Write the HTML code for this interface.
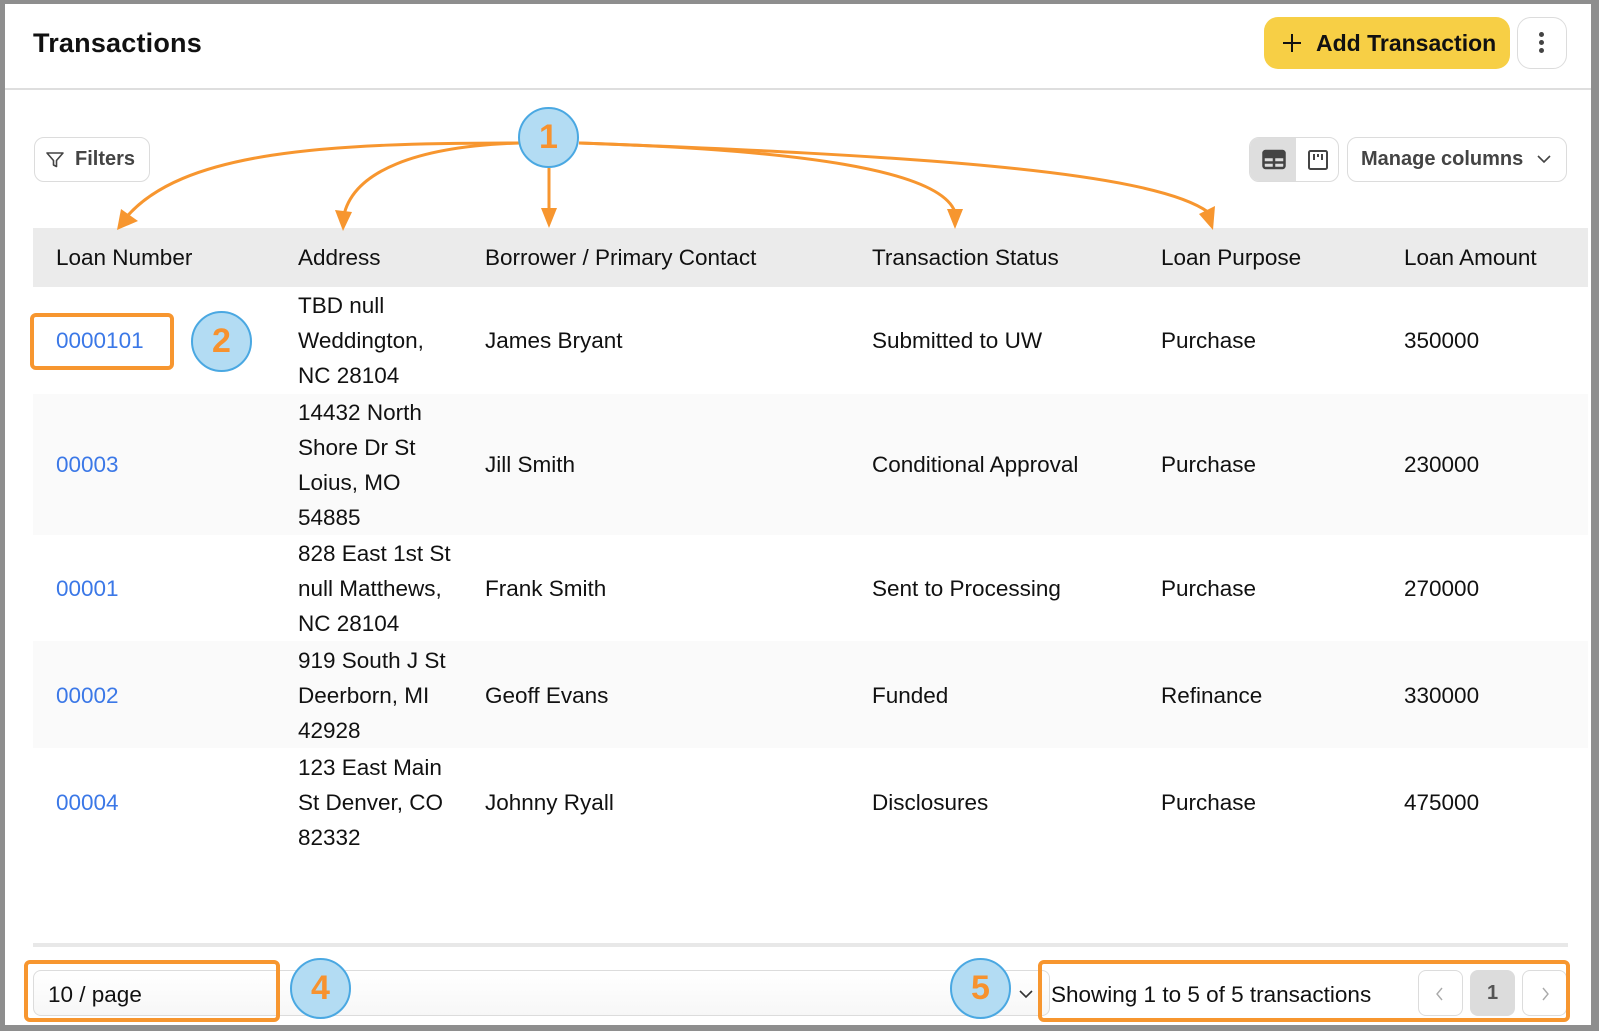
<!DOCTYPE html>
<html><head><meta charset="utf-8"><style>
*{box-sizing:border-box;margin:0;padding:0}
body{width:1599px;height:1031px;background:#8e8e8e;font-family:"Liberation Sans",sans-serif;color:#1a1a1a;position:relative;overflow:hidden}
.panel{position:absolute;left:5px;top:4px;width:1586px;height:1021px;background:#fff}
.abs{position:absolute}
.title{left:33px;top:28px;font-size:27px;font-weight:bold;color:#111;letter-spacing:0.2px}
.hline{left:5px;top:88px;width:1586px;height:2px;background:#dedede}
.btn{border:1.5px solid #dcdcdc;border-radius:10px;background:#fff}
.add{left:1264px;top:17px;width:246px;height:52px;background:#f7cf45;border-radius:14px;font-size:23px;font-weight:bold;line-height:52px;padding-left:52px;color:#111}
.add:before{content:"";position:absolute;left:19px;top:25px;width:18px;height:2px;background:#111}
.add:after{content:"";position:absolute;left:27px;top:17px;width:2px;height:18px;background:#111}
.th{top:228px;left:33px;width:1555px;height:59px;background:#ebebeb}
.cell{position:absolute;font-size:22.5px;line-height:35px;color:#111}
.link{color:#3b78e7}
.stripe{left:33px;width:1555px;background:#fafafa}
.circ{position:absolute;width:61px;height:61px;border-radius:50%;background:#b3dcf3;border:2px solid #4aa8e2;color:#f7922e;font-size:34px;font-weight:bold;text-align:center;line-height:57px}
.obox{position:absolute;border:4px solid #f7962f;border-radius:6px}
</style></head><body>
<div class="panel"></div>
<div class="abs title">Transactions</div>
<div class="abs hline"></div>
<div class="abs add">Add Transaction</div>
<div class="abs btn" style="left:1517px;top:17px;width:50px;height:52px;border-radius:14px">
 <div class="abs" style="left:21px;top:14px;width:5px;height:5px;border-radius:50%;background:#444"></div>
 <div class="abs" style="left:21px;top:22px;width:5px;height:5px;border-radius:50%;background:#444"></div>
 <div class="abs" style="left:21px;top:30px;width:5px;height:5px;border-radius:50%;background:#444"></div>
</div>
<div class="abs btn" style="left:34px;top:137px;width:116px;height:45px;font-size:20px;font-weight:bold;color:#444;line-height:42px;padding-left:40px">Filters
 <svg class="abs" style="left:10px;top:12px" width="20" height="20" viewBox="0 0 20 20"><path d="M2 3h16l-6.5 7.5v6l-3-1.5v-4.5z" fill="none" stroke="#444" stroke-width="1.6" stroke-linejoin="round"/></svg>
</div>
<div class="abs btn" style="left:1249px;top:137px;width:90px;height:45px;overflow:hidden">
 <div class="abs" style="left:0;top:0;width:46px;height:45px;background:#dedede"></div>
 <svg class="abs" style="left:12px;top:11px" width="24" height="22" viewBox="0 0 24 22"><rect x="1.5" y="2" width="21" height="17" rx="2" fill="none" stroke="#444" stroke-width="2.5"/><path d="M1.5 8h21M12 8v11M1.5 13.5h21" stroke="#444" stroke-width="2.5"/><rect x="1.5" y="2" width="21" height="6" fill="#444"/></svg>
 <svg class="abs" style="left:57px;top:11px" width="22" height="22" viewBox="0 0 22 22"><rect x="2" y="2" width="18" height="18" rx="1.5" fill="none" stroke="#444" stroke-width="2"/><path d="M7 5v6M11 5v3M15 5v6" stroke="#444" stroke-width="2"/></svg>
</div>
<div class="abs btn" style="left:1347px;top:137px;width:220px;height:45px;font-size:20px;font-weight:bold;color:#444;line-height:42px;padding-left:13px">Manage columns
 <svg class="abs" style="left:188px;top:15px" width="16" height="12" viewBox="0 0 16 12"><path d="M2 3l6 6 6-6" fill="none" stroke="#444" stroke-width="1.6"/></svg>
</div>

<div class="abs th"></div>
<div class="abs stripe" style="top:394px;height:141px"></div>
<div class="abs stripe" style="top:641px;height:107px"></div>

<div class="cell" style="left:56px;top:240px">Loan Number</div>
<div class="cell" style="left:298px;top:240px">Address</div>
<div class="cell" style="left:485px;top:240px">Borrower / Primary Contact</div>
<div class="cell" style="left:872px;top:240px">Transaction Status</div>
<div class="cell" style="left:1161px;top:240px">Loan Purpose</div>
<div class="cell" style="left:1404px;top:240px">Loan Amount</div>

<div class="cell link" style="left:56px;top:323px">0000101</div>
<div class="cell" style="left:298px;top:288px">TBD null<br>Weddington,<br>NC 28104</div>
<div class="cell" style="left:485px;top:323px">James Bryant</div>
<div class="cell" style="left:872px;top:323px">Submitted to UW</div>
<div class="cell" style="left:1161px;top:323px">Purchase</div>
<div class="cell" style="left:1404px;top:323px">350000</div>

<div class="cell link" style="left:56px;top:447px">00003</div>
<div class="cell" style="left:298px;top:395px">14432 North<br>Shore Dr St<br>Loius, MO<br>54885</div>
<div class="cell" style="left:485px;top:447px">Jill Smith</div>
<div class="cell" style="left:872px;top:447px">Conditional Approval</div>
<div class="cell" style="left:1161px;top:447px">Purchase</div>
<div class="cell" style="left:1404px;top:447px">230000</div>

<div class="cell link" style="left:56px;top:571px">00001</div>
<div class="cell" style="left:298px;top:536px">828 East 1st St<br>null Matthews,<br>NC 28104</div>
<div class="cell" style="left:485px;top:571px">Frank Smith</div>
<div class="cell" style="left:872px;top:571px">Sent to Processing</div>
<div class="cell" style="left:1161px;top:571px">Purchase</div>
<div class="cell" style="left:1404px;top:571px">270000</div>

<div class="cell link" style="left:56px;top:678px">00002</div>
<div class="cell" style="left:298px;top:643px">919 South J St<br>Deerborn, MI<br>42928</div>
<div class="cell" style="left:485px;top:678px">Geoff Evans</div>
<div class="cell" style="left:872px;top:678px">Funded</div>
<div class="cell" style="left:1161px;top:678px">Refinance</div>
<div class="cell" style="left:1404px;top:678px">330000</div>

<div class="cell link" style="left:56px;top:785px">00004</div>
<div class="cell" style="left:298px;top:750px">123 East Main<br>St Denver, CO<br>82332</div>
<div class="cell" style="left:485px;top:785px">Johnny Ryall</div>
<div class="cell" style="left:872px;top:785px">Disclosures</div>
<div class="cell" style="left:1161px;top:785px">Purchase</div>
<div class="cell" style="left:1404px;top:785px">475000</div>

<div class="abs" style="left:33px;top:943px;width:1535px;height:4px;background:#e8e8e8"></div>
<div class="abs btn" style="left:33px;top:970px;width:1017px;height:46px;border-radius:8px;background:linear-gradient(#fff,#f7f7f7)"></div>
<div class="cell" style="left:48px;top:977px">10 / page</div>
<svg class="abs" style="left:1018px;top:988px" width="16" height="12" viewBox="0 0 16 12"><path d="M2 3l6 6 6-6" fill="none" stroke="#333" stroke-width="1.6"/></svg>
<div class="cell" style="left:1051px;top:977px">Showing 1 to 5 of 5 transactions</div>
<div class="abs btn" style="left:1418px;top:970px;width:45px;height:46px;border-radius:8px"><svg class="abs" style="left:15px;top:15px" width="12" height="16" viewBox="0 0 12 16"><path d="M8 2L3 8l5 6" fill="none" stroke="#aaa" stroke-width="1.4"/></svg></div>
<div class="abs" style="left:1470px;top:970px;width:45px;height:46px;border-radius:8px;background:#dcdcdc;font-size:20px;font-weight:bold;color:#555;text-align:center;line-height:46px">1</div>
<div class="abs btn" style="left:1522px;top:970px;width:45px;height:46px;border-radius:8px"><svg class="abs" style="left:16px;top:15px" width="12" height="16" viewBox="0 0 12 16"><path d="M4 2l5 6-5 6" fill="none" stroke="#aaa" stroke-width="1.4"/></svg></div>

<svg class="abs" style="left:0;top:0" width="1599" height="1031" viewBox="0 0 1599 1031">
 <g fill="none" stroke="#f7962f" stroke-width="3">
  <path d="M520 143 C330 143 180 150 124 220"/>
  <path d="M520 143 C420 146 350 170 343 220"/>
  <path d="M549 168 L549 212"/>
  <path d="M579 143 C800 150 940 170 955 212"/>
  <path d="M579 143 C900 155 1150 170 1208 212"/>
 </g>
 <g fill="#f7962f">
  <path d="M117 230 L121 209 L138 221z"/>
  <path d="M343 231 L335 210 L352 212z"/>
  <path d="M549 228 L541 208 L557 208z"/>
  <path d="M955 229 L947 209 L963 209z"/>
  <path d="M1213 230 L1199 214 L1215 206z"/>
 </g>
</svg>
<div class="circ" style="left:518px;top:107px">1</div>
<div class="obox" style="left:30px;top:313px;width:144px;height:57px"></div>
<div class="circ" style="left:191px;top:311px">2</div>
<div class="obox" style="left:24px;top:960px;width:256px;height:62px"></div>
<div class="circ" style="left:290px;top:958px">4</div>
<div class="circ" style="left:950px;top:958px">5</div>
<div class="obox" style="left:1038px;top:960px;width:532px;height:62px"></div>
</body></html>
